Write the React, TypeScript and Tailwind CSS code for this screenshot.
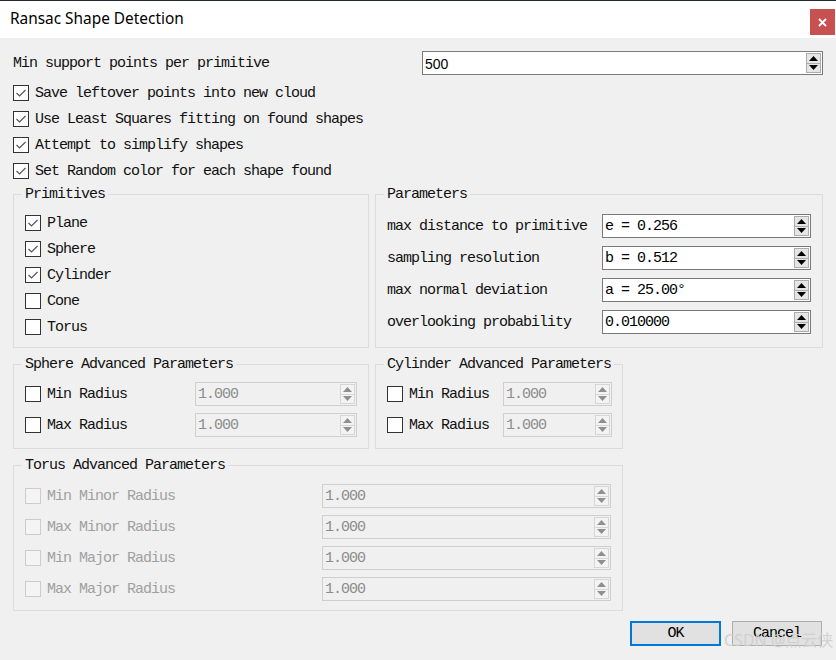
import React from "react";

const mono = "font-['Liberation_Mono',monospace] text-[15px] tracking-[-1px] leading-none";

function Check({ checked = false, disabled = false }: { checked?: boolean; disabled?: boolean }) {
  return (
    <span
      className={`inline-flex w-[16px] h-[16px] shrink-0 items-center justify-center border ${
        disabled ? "border-[#cccccc] bg-[#f4f4f4]" : "border-[#333333] bg-white"
      }`}
    >
      {checked && (
        <svg width="14" height="14" viewBox="0 0 14 14">
          <polyline points="2.5,7 5.5,10 11.5,4" fill="none" stroke="#555555" strokeWidth="1.2" />
        </svg>
      )}
    </span>
  );
}

function CheckRow({
  label,
  checked = false,
  disabled = false,
  className = "",
}: {
  label: string;
  checked?: boolean;
  disabled?: boolean;
  className?: string;
}) {
  return (
    <div className={`flex items-center gap-[6px] ${className}`}>
      <Check checked={checked} disabled={disabled} />
      <span className={`${mono} ${disabled ? "text-[#a0a0a0]" : "text-[#111111]"} whitespace-pre`}>{label}</span>
    </div>
  );
}

function Arrow({ up, color }: { up: boolean; color: string }) {
  return (
    <svg width="9" height="5" viewBox="0 0 9 5">
      {up ? <polygon points="4.5,0 9,5 0,5" fill={color} /> : <polygon points="0,0 9,0 4.5,5" fill={color} />}
    </svg>
  );
}

function Spin({
  value,
  width,
  disabled = false,
  sans = false,
}: {
  value: string;
  width: string;
  disabled?: boolean;
  sans?: boolean;
}) {
  const btn = disabled
    ? "border-[#d6d6d6] bg-[#f3f3f3]"
    : "border-[#adadad] bg-[#e5e5e5]";
  const arrow = disabled ? "#8f8f8f" : "#000000";
  return (
    <div
      className={`${width} h-[24px] flex items-center border ${
        disabled ? "border-[#cfcfcf] bg-[#f0f0f0]" : "border-[#7a7a7a] bg-white"
      }`}
    >
      <span
        className={`flex-1 pl-[2px] pt-[1px] ${
          sans ? "font-['Liberation_Sans',sans-serif] text-[14px] leading-none" : mono
        } ${disabled ? "text-[#8c8c8c]" : "text-[#000000]"}`}
      >
        {value}
      </span>
      <div className="flex flex-col h-full py-[1px] pr-[1px] w-[16px]">
        <div className={`flex-1 flex items-center justify-center border ${btn}`}>
          <Arrow up color={arrow} />
        </div>
        <div className={`flex-1 flex items-center justify-center border border-t-0 ${btn}`}>
          <Arrow up={false} color={arrow} />
        </div>
      </div>
    </div>
  );
}

function Group({
  title,
  className,
  children,
}: {
  title: string;
  className: string;
  children: React.ReactNode;
}) {
  return (
    <div className={`relative border border-[#dcdcdc] ${className}`}>
      <span className={`absolute left-[8px] top-[-8px] bg-[#f0f0f0] px-[3px] ${mono} text-[#111111]`}>
        {title}
      </span>
      {children}
    </div>
  );
}

export default function App() {
  return (
    <div className="relative w-[836px] h-[660px] bg-[#f0f0f0] overflow-hidden">
      {/* title bar */}
      <div className="h-[38px] bg-white flex items-start justify-between border-t border-[#1f2b30]">
        <span className="pl-[10px] pt-[8px] font-['Noto_Sans',sans-serif] text-[15.4px] text-black leading-[20px]">
          Ransac Shape Detection
        </span>
        <div className="mt-[8px] mr-[1px] w-[25px] h-[26px] bg-[#c75050] flex items-center justify-center">
          <svg width="9" height="9" viewBox="0 0 9 9">
            <path d="M1 1 L8 8 M8 1 L1 8" stroke="white" strokeWidth="1.8" />
          </svg>
        </div>
      </div>

      <div className="pl-[13px] pr-[13px] pt-[13px]">
        {/* support points */}
        <div className="flex items-center justify-between h-[24px]">
          <span className={`${mono} text-[#111111] pt-[1px]`}>Min support points per primitive</span>
          <Spin value="500" width="w-[401px]" sans />
        </div>

        <div className="pt-[5px]">
          <CheckRow className="h-[26px]" checked label="Save leftover points into new cloud" />
          <CheckRow className="h-[26px]" checked label="Use Least Squares fitting on found shapes" />
          <CheckRow className="h-[26px]" checked label="Attempt to simplify shapes" />
          <CheckRow className="h-[26px]" checked label="Set Random color for each shape found" />
        </div>

        {/* primitives + parameters */}
        <div className="flex gap-[6px] mt-[10px]">
          <Group title="Primitives" className="w-[356px] h-[154px] pl-[11px] pt-[15px]">
            <CheckRow className="h-[26px]" checked label="Plane" />
            <CheckRow className="h-[26px]" checked label="Sphere" />
            <CheckRow className="h-[26px]" checked label="Cylinder" />
            <CheckRow className="h-[26px]" label="Cone" />
            <CheckRow className="h-[26px]" label="Torus" />
          </Group>
          <Group title="Parameters" className="w-[448px] h-[154px] pl-[11px] pr-[11px] pt-[19px] flex flex-col gap-[8px]">
            {[
              ["max distance to primitive", "e = 0.256"],
              ["sampling resolution", "b = 0.512"],
              ["max normal deviation", "a = 25.00°"],
              ["overlooking probability", "0.010000"],
            ].map(([label, value]) => (
              <div key={label} className="flex items-center justify-between h-[24px]">
                <span className={`${mono} text-[#111111]`}>{label}</span>
                <Spin value={value} width="w-[209px]" />
              </div>
            ))}
          </Group>
        </div>

        {/* sphere + cylinder advanced */}
        <div className="flex gap-[6px] mt-[16px]">
          <Group title="Sphere Advanced Parameters" className="w-[356px] h-[85px] pl-[11px] pr-[11px] pt-[17px] flex flex-col gap-[7px]">
            {["Min Radius", "Max Radius"].map((l) => (
              <div key={l} className="flex items-center justify-between h-[24px]">
                <CheckRow label={l} />
                <Spin value="1.000" width="w-[162px]" disabled />
              </div>
            ))}
          </Group>
          <Group title="Cylinder Advanced Parameters" className="w-[248px] h-[85px] pl-[11px] pr-[10px] pt-[17px] flex flex-col gap-[7px]">
            {["Min Radius", "Max Radius"].map((l) => (
              <div key={l} className="flex items-center justify-between h-[24px]">
                <CheckRow label={l} />
                <Spin value="1.000" width="w-[109px]" disabled />
              </div>
            ))}
          </Group>
        </div>

        {/* torus advanced */}
        <Group title="Torus Advanced Parameters" className="mt-[16px] w-[610px] h-[146px] pl-[11px] pr-[11px] pt-[18px] flex flex-col gap-[7px]">
          {["Min Minor Radius", "Max Minor Radius", "Min Major Radius", "Max Major Radius"].map((l) => (
            <div key={l} className="flex items-center justify-between h-[24px]">
              <CheckRow label={l} disabled />
              <Spin value="1.000" width="w-[289px]" disabled />
            </div>
          ))}
        </Group>

        {/* dialog buttons */}
        <div className="flex justify-end gap-[11px] mt-[10px] pr-[1px]">
          <button className={`w-[91px] h-[25px] border-2 border-[#0078d7] bg-[#e1e1e1] ${mono} text-black`}>OK</button>
          <button className={`w-[90px] h-[25px] border border-[#adadad] bg-[#e1e1e1] ${mono} text-black`}>Cancel</button>
        </div>
      </div>

      <span className="absolute left-[724px] top-[630px] font-['Noto_Sans','Noto_Sans_CJK_SC',sans-serif] text-[16px] leading-[20px] text-[#cfcfcf] opacity-90 pointer-events-none">
        CSDN @点云侠
      </span>
    </div>
  );
}
